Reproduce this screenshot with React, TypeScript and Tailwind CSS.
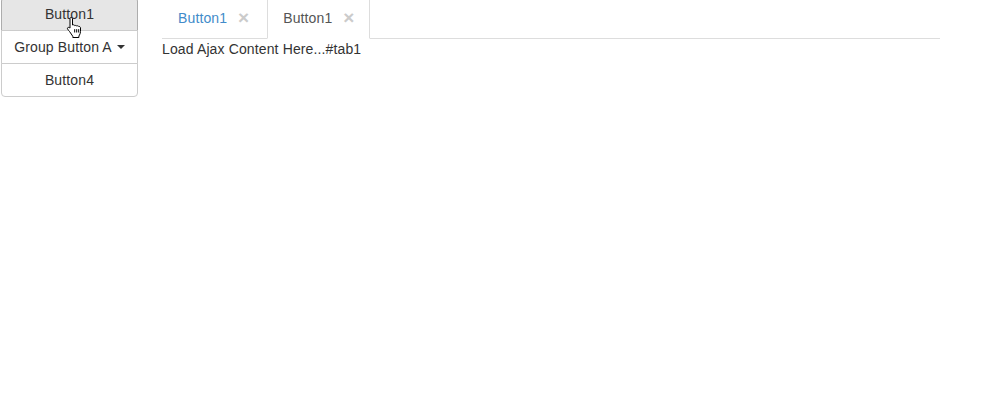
function HandCursor() {
  return (
    <svg
      className="pointer-events-none absolute left-[66px] top-[16px]"
      width="17"
      height="22"
      viewBox="0 0 17 22"
    >
      <path
        d="M5 1.5c.8 0 1.5.7 1.5 1.5v6l.4-.1c.8-.3 1.6.1 1.9.8.6-.4 1.5-.3 2 .3.6-.4 1.6-.2 2 .5.8-.2 1.7.4 1.7 1.3v3.6c0 1.4-.4 2.6-1 3.6l-.6 1v1.5H6.8v-1.2L3.6 15.6c-.6-.7-1.6-1.8-2-2.6-.5-.9.2-1.8 1.2-1.6.4.1.8.3 1.2.7V3c0-.8.2-1.5 1-1.5z"
        fill="#fff"
        stroke="#000"
        strokeWidth="1"
        strokeLinejoin="round"
      />
      <path d="M8.7 13.2v3.3M10.7 13.2v3.3M12.7 13.2v3.3" stroke="#000" strokeWidth="1" />
    </svg>
  )
}

function Tab({ label, active }: { label: string; active?: boolean }) {
  return (
    <li className={active ? "-mb-px" : "-mb-px mr-[2px]"}>
      <div
        className={
          active
            ? "flex items-center border border-[#ddd] border-b-white bg-white px-[15px] py-[10px] leading-5 text-[#555]"
            : "flex items-center border border-transparent px-[15px] py-[10px] leading-5 text-[#428bca]"
        }
      >
        <span>{label}</span>
        <span className="ml-[11px] flex w-[11px] justify-center text-[19px] font-bold leading-5 text-[#cbcbcb]">
          ×
        </span>
      </div>
    </li>
  )
}

export default function App() {
  return (
    <div
      className="relative h-[420px] w-[989px] overflow-hidden bg-white text-[14px] leading-5 tracking-[0.13px] text-[#333]"
      style={{ fontFamily: '"Helvetica Neue", "Liberation Sans", Arial, sans-serif' }}
    >
      <div className="-mt-[3px] flex items-start">
        <div className="ml-[1px] flex w-[137px] flex-col">
          <button className="rounded-t-[4px] border border-[#adadad] bg-[#e6e6e6] px-3 py-[6px] leading-5 text-[#333]">
            Button1
          </button>
          <button className="-mt-px flex items-center justify-center border border-[#ccc] bg-white px-3 py-[6px] leading-5 text-[#333]">
            Group Button A
            <span className="ml-[5px] inline-block h-0 w-0 border-x-[4px] border-t-[4px] border-x-transparent border-t-[#333]" />
          </button>
          <button className="-mt-px rounded-b-[4px] border border-[#ccc] bg-white px-3 py-[6px] leading-5 text-[#333]">
            Button4
          </button>
        </div>
        <div className="ml-[24px] w-[778px]">
          <ul className="flex border-b border-[#ddd]">
            <Tab label="Button1" />
            <Tab label="Button1" active />
          </ul>
          <div className="leading-5">Load Ajax Content Here...#tab1</div>
        </div>
      </div>
      <HandCursor />
    </div>
  )
}
